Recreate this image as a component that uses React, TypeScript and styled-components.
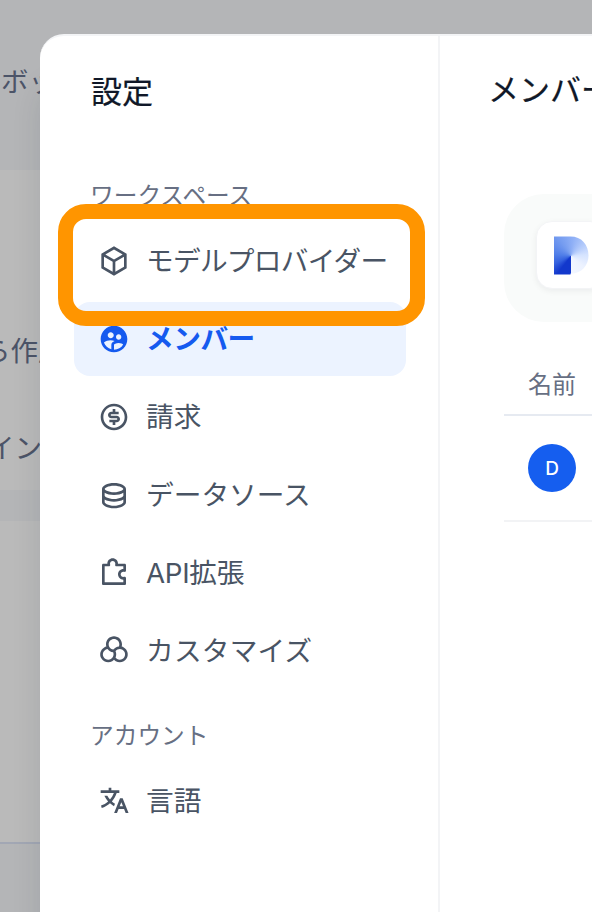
import React from "react";
import styled, { createGlobalStyle, css } from "styled-components";
import {
  RiBox3Line,
  RiGroup2Fill,
  RiMoneyDollarCircleLine,
  RiDatabase2Line,
  RiPuzzle2Line,
  RiColorFilterLine,
  RiTranslate2,
} from "react-icons/ri";

const GlobalStyle = createGlobalStyle`
  *, *::before, *::after { box-sizing: border-box; }
  html, body, #root { margin: 0; height: 100%; }
  body {
    overflow: hidden;
    font-family: Inter, "Noto Sans CJK JP", sans-serif;
    color: #354052;
  }
`;

const Screen = styled.div`
  position: relative;
  width: 592px;
  height: 912px;
  overflow: hidden;
  background: #b4b5b7;
`;

const Backdrop = styled.div`
  display: flex;
  flex-direction: column;
  height: 100%;
`;

const BackdropBand = styled.div<{ $height: number; $light?: boolean; $line?: boolean }>`
  flex: none;
  height: ${(p) => p.$height}px;
  background: ${(p) => (p.$light ? "#bababa" : "#b4b5b7")};
  border-bottom: ${(p) => (p.$line ? "2px solid #a2a7b4" : "none")};
`;

const BackdropText = styled.div<{ $top: number; $shift: number }>`
  padding-top: ${(p) => p.$top}px;
  margin-left: ${(p) => p.$shift}px;
  font-size: 27.5px;
  line-height: 36px;
  white-space: nowrap;
  color: #4c5468;
`;

const Modal = styled.main`
  position: absolute;
  left: 40px;
  top: 34px;
  display: flex;
  width: 1200px;
  height: 1000px;
  border-top: 2px solid #f3f4f6;
  border-radius: 24px;
  overflow: hidden;
  background: #fff;
`;

const ModalShadow = styled.div`
  position: absolute;
  left: 40px;
  top: 84px;
  width: 1200px;
  height: 1000px;
  border-radius: 24px;
  box-shadow: 0 0 30px rgba(16, 35, 50, 0.11);
`;

const Sidebar = styled.nav`
  flex: none;
  width: 400px;
  padding: 35px 32px 0 34px;
  border-right: 2px solid #f3f4f6;
`;

const Title = styled.h1`
  margin: 0 0 0 17px;
  font-size: 31px;
  line-height: 42px;
  font-weight: 400;
  -webkit-text-stroke: 0.2px currentColor;
  white-space: nowrap;
  color: #101828;
`;

const GroupLabel = styled.div<{ $gap: number }>`
  margin: ${(p) => p.$gap}px 0 0 16px;
  font-size: 23.7px;
  line-height: 32px;
  color: #676f83;
`;

const Menu = styled.div<{ $gap: number }>`
  display: flex;
  flex-direction: column;
  gap: 4px;
  margin-top: ${(p) => p.$gap}px;
`;

const MenuItem = styled.div<{ $active?: boolean }>`
  display: flex;
  align-items: center;
  gap: 16px;
  height: 74px;
  padding-left: 24px;
  border-radius: 16px;
  color: #495464;
  font-size: 27.7px;
  line-height: 40px;
  white-space: nowrap;

  svg { flex: none; width: 32px; height: 32px; }

  ${(p) =>
    p.$active &&
    css`
      background: #ecf3ff;
      color: #155aef;
      font-weight: 700;
    `}
`;

const ItemText = styled.span<{ $tracking?: number }>`
  letter-spacing: ${(p) => p.$tracking ?? 0}px;
`;

const Content = styled.section`
  flex: 1;
  padding: 33px 0 0 64px;
`;

const Heading = styled(Title)`
  margin: 0 0 0 -16px;
`;

const WorkspaceCard = styled.div`
  display: flex;
  align-items: center;
  height: 128px;
  margin-top: 83px;
  padding: 0 0 6px 32px;
  border-radius: 40px;
  background: #f9fbfa;
`;

const LogoTile = styled.div`
  display: flex;
  align-items: center;
  justify-content: center;
  width: 70px;
  height: 68px;
  border: 1px solid #f3f4f6;
  border-radius: 16px;
  background: #fff;
  box-shadow: 0 2px 6px rgba(16, 24, 40, 0.06);
`;

const LogoMark = styled.div`
  width: 35px;
  height: 39px;
  clip-path: path("M0 1 H17 C28 1 35 9 35 20 C35 30 28 38 18 38 H17 V39 H0 Z");
  background: conic-gradient(
    from 180deg at 17px 20px,
    #1238cc 0deg,
    #1238cc 38deg,
    #3562df 65deg,
    #4f7de8 95deg,
    #759cf0 145deg,
    #8eaff6 185deg,
    #b4cbfb 230deg,
    #d5e3ff 265deg,
    #ecf2ff 310deg,
    #f3f7ff 360deg
  );
`;

const TableHead = styled.div`
  height: 54px;
  margin-top: 40px;
  padding: 6px 0 0 24px;
  border-bottom: 2px solid #e6eaf1;
  font-size: 24px;
  line-height: 34px;
  color: #676f83;
`;

const TableRow = styled.div`
  display: flex;
  align-items: center;
  height: 106px;
  padding-left: 24px;
  border-bottom: 2px solid #f2f3f5;
`;

const Avatar = styled.div`
  display: flex;
  align-items: center;
  justify-content: center;
  width: 48px;
  height: 48px;
  border-radius: 50%;
  background: #155eef;
  color: #fff;
  font-size: 19px;
  font-weight: 500;
`;

const Highlight = styled.div`
  position: absolute;
  left: 58px;
  top: 204px;
  width: 367px;
  height: 122px;
  border: 15px solid #ff9500;
  border-radius: 28px;
`;

const workspaceItems = [
  { label: "モデルプロバイダー", Icon: RiBox3Line, tracking: -0.75 },
  { label: "メンバー", Icon: RiGroup2Fill, active: true, tracking: -0.5 },
  { label: "請求", Icon: RiMoneyDollarCircleLine },
  { label: "データソース", Icon: RiDatabase2Line },
  { label: "API拡張", Icon: RiPuzzle2Line, tracking: -0.3 },
  { label: "カスタマイズ", Icon: RiColorFilterLine, tracking: 0.2 },
];

export default function App() {
  return (
    <Screen>
      <GlobalStyle />
      <Backdrop>
        <BackdropBand $height={170}>
          <BackdropText $top={64} $shift={1}>ボット</BackdropText>
        </BackdropBand>
        <BackdropBand $height={320} $light>
          <BackdropText $top={163} $shift={-17}>ら作成</BackdropText>
          <BackdropText $top={61} $shift={-13}>イント</BackdropText>
        </BackdropBand>
        <BackdropBand $height={31} />
        <BackdropBand $height={323} $light $line />
      </Backdrop>
      <ModalShadow />
      <Modal>
        <Sidebar>
          <Title>設定</Title>
          <GroupLabel $gap={67}>ワークスペース</GroupLabel>
          <Menu $gap={12}>
            {workspaceItems.map(({ label, Icon, active, tracking }) => (
              <MenuItem key={label} $active={active}>
                <Icon />
                <ItemText $tracking={tracking}>{label}</ItemText>
              </MenuItem>
            ))}
          </Menu>
          <GroupLabel $gap={32}>アカウント</GroupLabel>
          <Menu $gap={12}>
            <MenuItem>
              <RiTranslate2 />
              <ItemText>言語</ItemText>
            </MenuItem>
          </Menu>
        </Sidebar>
        <Content>
          <Heading>メンバー</Heading>
          <WorkspaceCard>
            <LogoTile>
              <LogoMark />
            </LogoTile>
          </WorkspaceCard>
          <TableHead>名前</TableHead>
          <TableRow>
            <Avatar>D</Avatar>
          </TableRow>
        </Content>
      </Modal>
      <Highlight />
    </Screen>
  );
}
